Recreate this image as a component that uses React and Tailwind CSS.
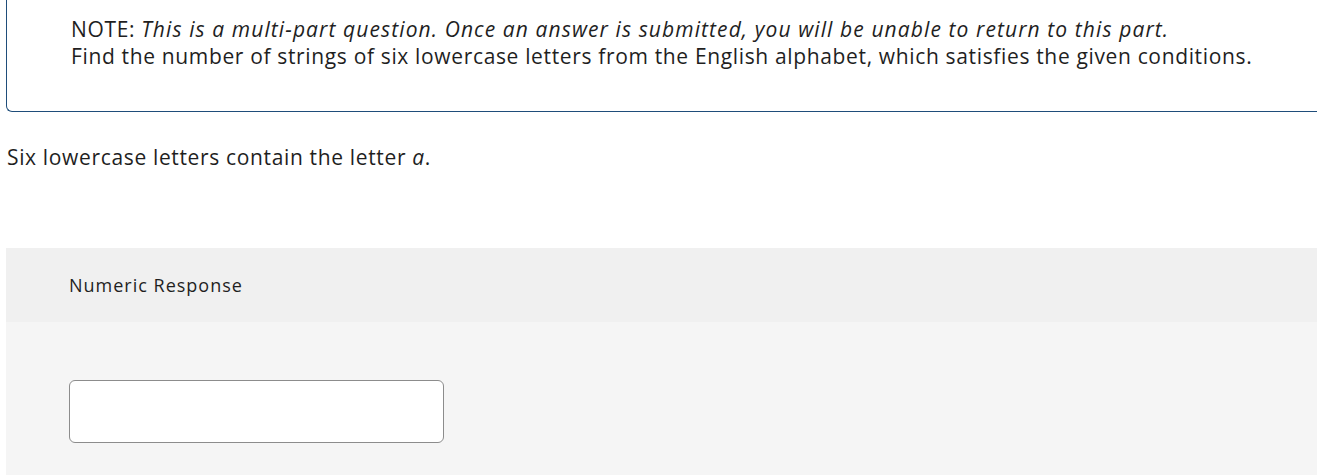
export default function App() {
  return (
    <div className="min-h-screen bg-white text-[#1f1f1f] font-['Open_Sans',sans-serif]">
      {/* Question prompt box */}
      <div className="ml-[6px] border-l border-b border-[#1f4d7a] rounded-bl-[6px] pl-[64px] pt-[16px] pb-[41px] text-[21px] leading-[27px] tracking-[0.65px]">
        <p>
          NOTE: <em className="tracking-[1.1px]">This is a multi-part question. Once an answer is submitted, you will be unable to return to this part.</em>
        </p>
        <p>Find the number of strings of six lowercase letters from the English alphabet, which satisfies the given conditions.</p>
      </div>

      {/* Part text */}
      <p className="mt-[32px] pl-[7px] text-[21px] leading-[27px] tracking-[0.65px]">
        Six lowercase letters contain the letter <em>a</em>.
      </p>

      {/* Response area */}
      <div className="ml-[6px] mt-[77px]">
        <div className="h-[74px] bg-[#f0f0f0] pl-[63px] flex items-center text-[18px] tracking-[1px]">
          Numeric Response
        </div>
        <div className="bg-[#f5f5f5] pl-[63px] pt-[58px] pb-[40px]">
          <input
            type="text"
            className="block w-[375px] h-[63px] bg-white border border-[#8c8c8c] rounded-[6px] outline-none px-3"
          />
        </div>
      </div>
    </div>
  );
}
